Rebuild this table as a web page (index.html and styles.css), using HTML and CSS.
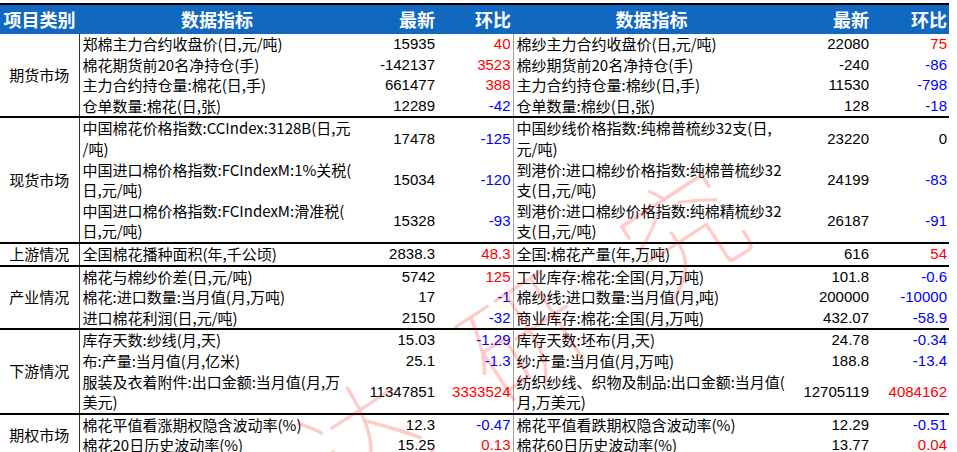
FILE: index.html
```html
<!DOCTYPE html>
<html lang="zh">
<head>
<meta charset="utf-8">
<title>棉花数据</title>
<link rel="stylesheet" href="styles.css">
</head>
<body>
<div class="sheet">
<table class="grid">
  <colgroup>
    <col class="w-cat"><col class="w-lbl"><col class="w-num"><col class="w-chg">
    <col class="w-lbl2"><col class="w-num2"><col class="w-chg2">
  </colgroup>
  <thead>
    <tr>
      <th class="h-c">项目类别</th>
      <th class="h-c">数据指标</th>
      <th class="h-r">最新</th>
      <th class="h-r h-chg">环比</th>
      <th class="h-c">数据指标</th>
      <th class="h-r">最新</th>
      <th class="h-r h-chg">环比</th>
    </tr>
  </thead>
  <tbody>
    <tr>
      <td class="cat" rowspan="4">期货市场</td>
      <td class="lbl">郑棉主力合约收盘价(日,元/吨)</td>
      <td class="num">15935</td><td class="chg mid up">40</td>
      <td class="lbl">棉纱主力合约收盘价(日,元/吨)</td>
      <td class="num">22080</td><td class="chg up">75</td>
    </tr>
    <tr>
      <td class="lbl">棉花期货前20名净持仓(手)</td>
      <td class="num">-142137</td><td class="chg mid up">3523</td>
      <td class="lbl">棉纱期货前20名净持仓(手)</td>
      <td class="num">-240</td><td class="chg dn">-86</td>
    </tr>
    <tr>
      <td class="lbl">主力合约持仓量:棉花(日,手)</td>
      <td class="num">661477</td><td class="chg mid up">388</td>
      <td class="lbl">主力合约持仓量:棉纱(日,手)</td>
      <td class="num">11530</td><td class="chg dn">-798</td>
    </tr>
    <tr>
      <td class="lbl">仓单数量:棉花(日,张)</td>
      <td class="num">12289</td><td class="chg mid dn">-42</td>
      <td class="lbl">仓单数量:棉纱(日,张)</td>
      <td class="num">128</td><td class="chg dn">-18</td>
    </tr>

    <tr class="sec">
      <td class="cat" rowspan="3">现货市场</td>
      <td class="lbl">中国棉花价格指数:CCIndex:3128B(日,元<br>/吨)</td>
      <td class="num">17478</td><td class="chg mid dn">-125</td>
      <td class="lbl">中国纱线价格指数:纯棉普梳纱32支(日,<br>元/吨)</td>
      <td class="num">23220</td><td class="chg">0</td>
    </tr>
    <tr>
      <td class="lbl">中国进口棉价格指数:FCIndexM:1%关税(<br>日,元/吨)</td>
      <td class="num">15034</td><td class="chg mid dn">-120</td>
      <td class="lbl">到港价:进口棉纱价格指数:纯棉普梳纱32<br>支(日,元/吨)</td>
      <td class="num">24199</td><td class="chg dn">-83</td>
    </tr>
    <tr>
      <td class="lbl">中国进口棉价格指数:FCIndexM:滑准税(<br>日,元/吨)</td>
      <td class="num">15328</td><td class="chg mid dn">-93</td>
      <td class="lbl">到港价:进口棉纱价格指数:纯棉精梳纱32<br>支(日,元/吨)</td>
      <td class="num">26187</td><td class="chg dn">-91</td>
    </tr>

    <tr class="sec">
      <td class="cat">上游情况</td>
      <td class="lbl">全国棉花播种面积(年,千公顷)</td>
      <td class="num">2838.3</td><td class="chg mid up">48.3</td>
      <td class="lbl">全国:棉花产量(年,万吨)</td>
      <td class="num">616</td><td class="chg up">54</td>
    </tr>

    <tr class="sec">
      <td class="cat" rowspan="3">产业情况</td>
      <td class="lbl">棉花与棉纱价差(日,元/吨)</td>
      <td class="num">5742</td><td class="chg mid up">125</td>
      <td class="lbl">工业库存:棉花:全国(月,万吨)</td>
      <td class="num">101.8</td><td class="chg dn">-0.6</td>
    </tr>
    <tr>
      <td class="lbl">棉花:进口数量:当月值(月,万吨)</td>
      <td class="num">17</td><td class="chg mid dn">-1</td>
      <td class="lbl">棉纱线:进口数量:当月值(月,吨)</td>
      <td class="num">200000</td><td class="chg dn">-10000</td>
    </tr>
    <tr>
      <td class="lbl">进口棉花利润(日,元/吨)</td>
      <td class="num">2150</td><td class="chg mid dn">-32</td>
      <td class="lbl">商业库存:棉花:全国(月,万吨)</td>
      <td class="num">432.07</td><td class="chg dn">-58.9</td>
    </tr>

    <tr class="sec">
      <td class="cat" rowspan="3">下游情况</td>
      <td class="lbl">库存天数:纱线(月,天)</td>
      <td class="num">15.03</td><td class="chg mid dn">-1.29</td>
      <td class="lbl">库存天数:坯布(月,天)</td>
      <td class="num">24.78</td><td class="chg dn">-0.34</td>
    </tr>
    <tr>
      <td class="lbl">布:产量:当月值(月,亿米)</td>
      <td class="num">25.1</td><td class="chg mid dn">-1.3</td>
      <td class="lbl">纱:产量:当月值(月,万吨)</td>
      <td class="num">188.8</td><td class="chg dn">-13.4</td>
    </tr>
    <tr>
      <td class="lbl">服装及衣着附件:出口金额:当月值(月,万<br>美元)</td>
      <td class="num">11347851</td><td class="chg mid up">3333524</td>
      <td class="lbl">纺织纱线、织物及制品:出口金额:当月值(<br>月,万美元)</td>
      <td class="num">12705119</td><td class="chg up">4084162</td>
    </tr>

    <tr class="sec">
      <td class="cat" rowspan="2">期权市场</td>
      <td class="lbl">棉花平值看涨期权隐含波动率(%)</td>
      <td class="num">12.3</td><td class="chg mid dn">-0.47</td>
      <td class="lbl">棉花平值看跌期权隐含波动率(%)</td>
      <td class="num">12.29</td><td class="chg dn">-0.51</td>
    </tr>
    <tr>
      <td class="lbl">棉花20日历史波动率(%)</td>
      <td class="num">15.25</td><td class="chg mid up">0.13</td>
      <td class="lbl">棉花60日历史波动率(%)</td>
      <td class="num">13.77</td><td class="chg up">0.04</td>
    </tr>
  </tbody>
</table>
<div class="watermark" aria-hidden="true">瑞达研究</div>
</div>
</body>
</html>
```

FILE: styles.css
```css
html, body {
  margin: 0;
  padding: 0;
  background: #ffffff;
}
body {
  padding-top: 3px;
  font-family: "Noto Sans CJK SC", "Liberation Sans", sans-serif;
  color: #000000;
  overflow: hidden;
}
.sheet {
  position: relative;
  width: 949px;
}
.grid {
  border-collapse: collapse;
  table-layout: fixed;
  width: 949px;
  font-size: 15px;
}
.w-cat { width: 79px; }
.w-lbl { width: 276px; }
.w-num { width: 83px; }
.w-chg { width: 75px; }
.w-lbl2 { width: 277px; }
.w-num2 { width: 82px; }
.w-chg2 { width: 77px; }

.grid thead th {
  background: #1068c0;
  color: #ffffff;
  font-weight: bold;
  font-size: 18px;
  height: 29px;
  line-height: 29px;
  padding: 0 3px 0 0;
  border-top: 2px solid #000000;
  white-space: nowrap;
}
.grid thead th.h-c { text-align: center; padding: 0; }
.grid thead th.h-r { text-align: right; }
.grid thead th.h-chg { padding-right: 2px; }

.grid td {
  padding: 0;
  line-height: 20.6px;
  white-space: nowrap;
  vertical-align: middle;
}
.grid tr.sec td {
  border-top: 2px solid #000000;
}
.cat {
  text-align: center;
  border-right: 1px solid #333333;
}
.lbl {
  text-align: left;
  padding-left: 3px !important;
}
.num {
  text-align: right;
  padding-right: 3px !important;
  font-family: "Liberation Sans", "Noto Sans CJK SC", sans-serif;
}
.chg {
  text-align: right;
  padding-right: 2px !important;
  font-family: "Liberation Sans", "Noto Sans CJK SC", sans-serif;
}
.mid {
  border-right: 1px solid #a0a0a0;
}
.up { color: #ff0000; }
.dn { color: #0000ff; }

.watermark {
  position: absolute;
  left: 60px;
  top: 320px;
  width: 760px;
  height: 120px;
  line-height: 120px;
  font-size: 120px;
  letter-spacing: 70px;
  text-indent: 35px;
  font-weight: 100;
  color: rgba(255, 0, 0, 0.2);
  white-space: nowrap;
  transform: rotate(-33deg);
  transform-origin: 50% 50%;
  pointer-events: none;
}
```
